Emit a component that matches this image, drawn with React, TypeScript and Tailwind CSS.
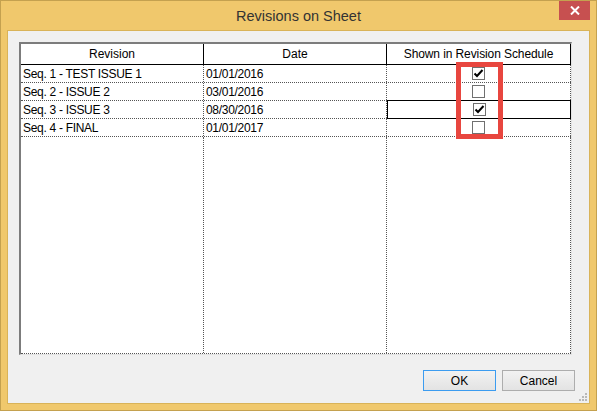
import React from "react";

const rows = [
  { rev: "Seq. 1 - TEST ISSUE 1", date: "01/01/2016", shown: true },
  { rev: "Seq. 2 - ISSUE 2", date: "03/01/2016", shown: false },
  { rev: "Seq. 3 - ISSUE 3", date: "08/30/2016", shown: true, focus: true },
  { rev: "Seq. 4 - FINAL", date: "01/01/2017", shown: false },
];

function Check({ on }: { on: boolean }) {
  return (
    <div className="w-[13px] h-[13px] border border-[#707070] bg-white flex items-center justify-center">
      {on && (
        <svg width="11" height="11" viewBox="0 0 11 11">
          <path d="M1.5 5.5 L4 8 L9.5 2" fill="none" stroke="#000" strokeWidth="2" />
        </svg>
      )}
    </div>
  );
}

export default function App() {
  return (
    <div
      className="w-[597px] h-[411px] bg-[#f0c86c] border border-[#c4a14f] flex flex-col overflow-hidden"
      style={{ fontFamily: '"Liberation Sans", Arial, sans-serif' }}
    >
      <div className="relative h-[29px] flex items-center justify-center shrink-0">
        <span className="text-[14.5px] text-[#333333] leading-none mt-[2px]">Revisions on Sheet</span>
        <div className="absolute right-[6px] top-[-1px] w-[31px] h-[20px] bg-[#c75050] flex items-center justify-center">
          <svg width="10" height="9" viewBox="0 0 10 9">
            <path d="M1 0.5 L9 8.5 M9 0.5 L1 8.5" stroke="#fff" strokeWidth="2" />
          </svg>
        </div>
      </div>
      <div className="mx-[6px] h-[374px] shrink-0 bg-[#f0f0f0] border border-[#d9b358] flex flex-col pt-[11px] pl-[11px] relative">
        <div className="relative w-[553px] h-[313px] border-t-2 border-l-2 border-[#7c7c7c] border-r border-b border-r-[#e3e3e3] border-b-[#e3e3e3] bg-white flex flex-col text-[12px] text-black">
          <div className="flex h-[21px] border-b border-black shrink-0">
            <div className="w-[183px] border-r border-black flex items-center justify-center">Revision</div>
            <div className="w-[183px] border-r border-black flex items-center justify-center">Date</div>
            <div className="w-[184px] border-r border-black flex items-center justify-center tracking-[-0.1px]">Shown in Revision Schedule</div>
          </div>
          <div className="flex-1 flex flex-col border-b border-dotted border-b-[#555]">
            {rows.map((r) => (
              <div key={r.rev} className="flex h-[18px] border-b border-dotted border-b-[#555] shrink-0 tracking-[-0.3px]">
                <div className="w-[183px] border-r border-dotted border-r-[#555] flex items-center pl-[2px]">{r.rev}</div>
                <div className="w-[183px] border-r border-dotted border-r-[#555] flex items-center pl-[2px]">{r.date}</div>
                <div
                  className={
                    r.focus
                      ? "w-[184px] border border-black -mt-[1px] h-[19px] flex items-center justify-center"
                      : "w-[184px] border-r border-dotted border-r-[#555] flex items-center justify-center"
                  }
                >
                  <Check on={r.shown} />
                </div>
              </div>
            ))}
            <div className="flex flex-1">
              <div className="w-[183px] border-r border-dotted border-r-[#555]" />
              <div className="w-[183px] border-r border-dotted border-r-[#555]" />
              <div className="w-[184px] border-r border-dotted border-r-[#555]" />
            </div>
          </div>
          <div className="absolute left-[435px] top-[18px] w-[47px] h-[77px] border-[5px] border-[#e8463f]" />
        </div>
        <div className="flex justify-end gap-[6px] pr-[14px] mt-[15px] text-[12px]">
          <button className="w-[73px] h-[21px] border border-[#3c9cf0] bg-gradient-to-b from-[#f2f2f2] to-[#e3e3e3] flex items-center justify-center text-black">
            OK
          </button>
          <button className="w-[73px] h-[21px] border border-[#adadad] bg-gradient-to-b from-[#f2f2f2] to-[#e3e3e3] flex items-center justify-center text-black">
            Cancel
          </button>
        </div>
        <svg className="absolute right-[1px] bottom-[1px]" width="9" height="9" viewBox="0 0 9 9">
          <rect x="6" y="0" width="2" height="2" fill="#b8b8b8" />
          <rect x="3" y="3" width="2" height="2" fill="#b8b8b8" />
          <rect x="6" y="3" width="2" height="2" fill="#b8b8b8" />
          <rect x="0" y="6" width="2" height="2" fill="#b8b8b8" />
          <rect x="3" y="6" width="2" height="2" fill="#b8b8b8" />
          <rect x="6" y="6" width="2" height="2" fill="#b8b8b8" />
        </svg>
      </div>
    </div>
  );
}
